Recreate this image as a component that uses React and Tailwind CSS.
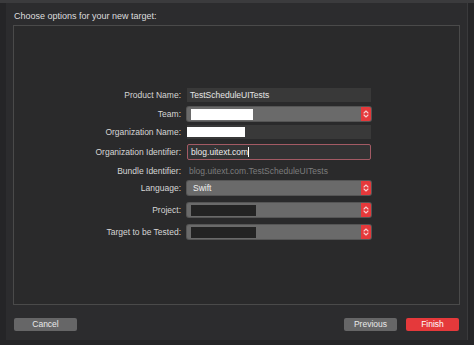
import React from 'react';

const Stepper = () => (
  <div className="w-[10px] h-full bg-[#e5393b] rounded-r-[2px] flex items-center justify-center">
    <svg width="6" height="10" viewBox="0 0 6 10" fill="none" stroke="#f5d0d0" strokeWidth="1.1" strokeLinecap="round" strokeLinejoin="round">
      <path d="M1 4 L3 2 L5 4" />
      <path d="M1 6 L3 8 L5 6" />
    </svg>
  </div>
);

const Row = ({ label, className = '', children }) => (
  <div className={`flex items-center ${className}`}>
    <div className="w-[173px] pr-[6px] text-right text-[8.5px] text-[#d6d6d6] leading-none">{label}</div>
    <div className="w-[184px] h-full flex">{children}</div>
  </div>
);

const Popup = ({ children }) => (
  <div className="flex-1 h-full bg-[#6a6a6a] rounded-[2px] flex items-stretch shadow-[0_0_0_1px_#555]">
    <div className="flex-1 flex items-center">{children}</div>
    <Stepper />
  </div>
);

export default function App() {
  return (
    <div
      className="w-[474px] h-[345px] bg-[#252527] flex flex-col"
      style={{ fontFamily: '"Liberation Sans", Arial, sans-serif' }}
    >
      <div className="h-[3px] bg-[#3b3b3d]" />
      <div className="flex-1 ml-[6px] mr-[6px] mb-[5px] bg-[#2c2c2e] flex flex-col border-r border-[#3a3a3c]">
        <div className="pt-[7px] pl-[8px] text-[9px] text-[#dedede] h-[22px]">Choose options for your new target:</div>
        <div className="mx-[7px] h-[280px] border border-[#4a4a4a] bg-[#2a2a2b] flex flex-col pt-[62px]">
          <Row label="Product Name:" className="h-[14px]">
            <div className="flex-1 bg-[#393939] flex items-center pl-[3px] text-[8.5px] text-[#e6e6e6]">TestScheduleUITests</div>
          </Row>
          <Row label="Team:" className="h-[14px] mt-[5px]">
            <Popup>
              <div className="ml-[4px] w-[62px] h-[11px] bg-white" />
            </Popup>
          </Row>
          <Row label="Organization Name:" className="h-[14px] mt-[4px]">
            <div className="flex-1 bg-[#393939] flex items-center">
              <div className="w-[58px] h-[10px] bg-white" />
            </div>
          </Row>
          <Row label="Organization Identifier:" className="h-[16px] mt-[5px]">
            <div className="flex-1 bg-[#333334] border-[1.5px] border-[#a35a64] rounded-[2px] flex items-center pl-[3px] text-[8.5px] text-[#ededed]">
              blog.uitext.com<span className="w-[1px] h-[10px] bg-white" />
            </div>
          </Row>
          <Row label="Bundle Identifier:" className="h-[14px] mt-[4px]">
            <div className="flex-1 flex items-center pl-[2px] text-[8.5px] text-[#7c7c7c]">blog.uitext.com.TestScheduleUITests</div>
          </Row>
          <Row label="Language:" className="h-[14px] mt-[3px]">
            <Popup>
              <span className="pl-[6px] text-[8.5px] text-[#f0f0f0]">Swift</span>
            </Popup>
          </Row>
          <Row label="Project:" className="h-[14px] mt-[8px]">
            <Popup>
              <div className="ml-[4px] w-[65px] h-[11px] bg-[#232323]" />
            </Popup>
          </Row>
          <Row label="Target to be Tested:" className="h-[14px] mt-[8px]">
            <Popup>
              <div className="ml-[4px] w-[65px] h-[11px] bg-[#232323]" />
            </Popup>
          </Row>
        </div>
        <div className="flex items-center px-[8px] mt-[13px]">
          <button className="w-[63px] h-[13px] bg-[#666667] rounded-[2px] text-[8.5px] text-[#eaeaea] leading-none">Cancel</button>
          <div className="flex-1" />
          <button className="w-[53px] h-[13px] bg-[#666667] rounded-[2px] text-[8.5px] text-[#eaeaea] leading-none">Previous</button>
          <button className="ml-[9px] w-[53px] h-[13px] bg-[#e5393b] rounded-[2px] text-[8.5px] text-white leading-none">Finish</button>
        </div>
      </div>
    </div>
  );
}
